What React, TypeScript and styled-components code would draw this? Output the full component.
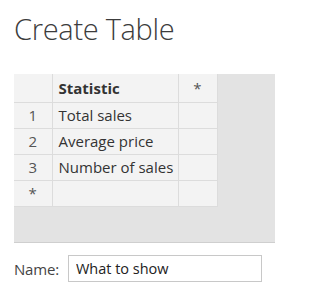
import React from 'react';
import styled, { createGlobalStyle } from 'styled-components';

const GlobalStyle = createGlobalStyle`
  html, body {
    margin: 0;
    padding: 0;
    background: #fff;
    font-family: 'Open Sans', 'Liberation Sans', sans-serif;
  }
`;

const Page = styled.div`
  width: 275px;
  height: 304px;
  overflow: hidden;
  padding-left: 14px;
  box-sizing: border-box;
`;

const Title = styled.h1`
  margin: 11px 0 27px 0;
  font-size: 29px;
  line-height: 36px;
  font-weight: 300;
  color: #3c3c3c;
  letter-spacing: -0.3px;
`;

const Panel = styled.div`
  height: 168px;
  background: #e3e3e3;
  border-bottom: 1px solid #cfcfcf;
`;

const Grid = styled.table`
  border-collapse: collapse;
  font-size: 15px;
  color: #333;
`;

interface CellProps {
  width: number;
  center?: boolean;
  bold?: boolean;
}

const Cell = styled.td<CellProps>`
  width: ${props => props.width}px;
  height: 26px;
  padding: 0 0 0 ${props => (props.center ? 0 : 6)}px;
  box-sizing: border-box;
  background: #f3f3f3;
  border: 1px solid #dcdcdc;
  text-align: ${props => (props.center ? 'center' : 'left')};
  font-weight: ${props => (props.bold ? 700 : 400)};
  color: ${props => (props.center ? '#555' : '#333')};
  white-space: nowrap;
  &:first-child {
    border-left: none;
  }
`;

const Row = styled.tr`
  &:first-child td {
    border-top: none;
    height: 28px;
  }
`;

const NameRow = styled.div`
  display: flex;
  align-items: center;
  margin-top: 12px;
  gap: 9px;
`;

const Label = styled.span`
  font-size: 15px;
  color: #444;
  letter-spacing: -0.2px;
`;

const NameInput = styled.input`
  width: 194px;
  height: 27px;
  box-sizing: border-box;
  border: 1px solid #c8c8c8;
  padding: 0 7px;
  font-family: 'Open Sans', 'Liberation Sans', sans-serif;
  font-size: 14.5px;
  color: #222;
  outline: none;
`;

const rows = ['Total sales', 'Average price', 'Number of sales'];

function App() {
  return (
    <Page>
      <GlobalStyle />
      <Title>Create Table</Title>
      <Panel>
        <Grid>
          <tbody>
            <Row>
              <Cell width={38} center></Cell>
              <Cell width={126} bold>Statistic</Cell>
              <Cell width={39} center>*</Cell>
            </Row>
            {rows.map((name, i) => (
              <Row key={name}>
                <Cell width={38} center>{i + 1}</Cell>
                <Cell width={126}>{name}</Cell>
                <Cell width={39} center></Cell>
              </Row>
            ))}
            <Row>
              <Cell width={38} center>*</Cell>
              <Cell width={126}></Cell>
              <Cell width={39} center></Cell>
            </Row>
          </tbody>
        </Grid>
      </Panel>
      <NameRow>
        <Label>Name:</Label>
        <NameInput defaultValue="What to show" />
      </NameRow>
    </Page>
  );
}

export default App;
